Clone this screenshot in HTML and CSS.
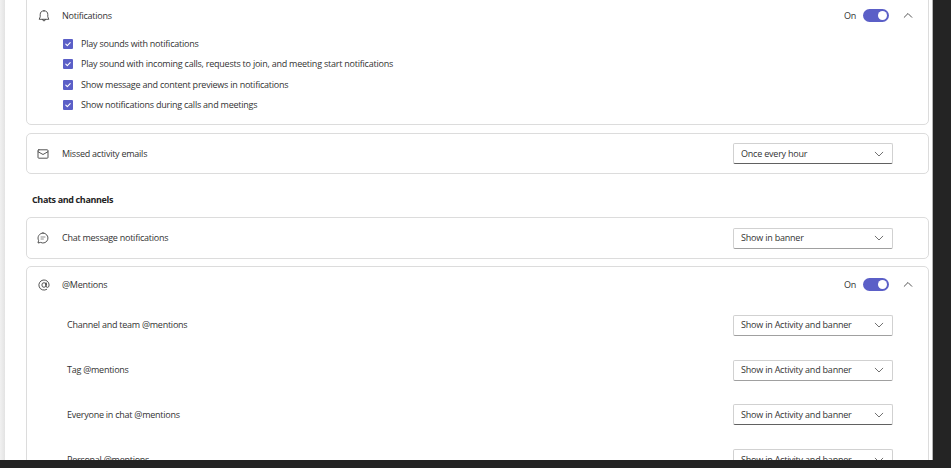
FILE: index.html
```html
<!DOCTYPE html>
<html lang="en">
<head>
    <meta charset="UTF-8">
    <meta name="viewport" content="width=device-width, initial-scale=1.0">
    <title>Notifications and activity</title>
    <link rel="stylesheet" href="styles.css">
</head>
<body>
<svg class="symbols" width="0" height="0">
    <symbol id="down" viewBox="0 0 10 10"><path d="M1.2 3.2 5 7l3.8-3.8"/></symbol>
    <symbol id="up" viewBox="0 0 10 10"><path d="M1.2 6.3 5 2.5l3.8 3.8"/></symbol>
    <symbol id="check" viewBox="0 0 10 10"><path d="m2.8 5.1 1.5 1.5 2.9-2.9"/></symbol>
</svg>
<main class="settings">
    <section class="card general">
        <div class="card-header">
            <svg class="icon" viewBox="0 0 12 12"><path d="M6 .8a3.8 3.8 0 0 0-3.8 3.8v2.2L1.2 9.3h9.6l-1-2.5V4.6A3.8 3.8 0 0 0 6 .8ZM4.6 9.5a1.4 1.4 0 0 0 2.8 0"/></svg>
            <span class="label">Notifications</span>
            <span class="state">On</span>
            <span class="toggle"></span>
            <svg class="chevron up"><use href="#up"/></svg>
        </div>
        <ul class="checks">
            <li><span class="checkbox"><svg><use href="#check"/></svg></span>Play sounds with notifications</li>
            <li><span class="checkbox"><svg><use href="#check"/></svg></span>Play sound with incoming calls, requests to join, and meeting start notifications</li>
            <li><span class="checkbox"><svg><use href="#check"/></svg></span>Show message and content previews in notifications</li>
            <li><span class="checkbox"><svg><use href="#check"/></svg></span>Show notifications during calls and meetings</li>
        </ul>
    </section>

    <section class="card single">
        <svg class="icon" viewBox="0 0 12 12"><path d="M1.8 1.8h8.4q.8 0 .8.8v6.8q0 .8-.8.8H1.8q-.8 0-.8-.8V2.6q0-.8.8-.8ZM1.2 3.8 6 6.5 10.8 3.8"/></svg>
        <span class="label">Missed activity emails</span>
        <div class="select dark">Once every hour<svg class="chevron"><use href="#down"/></svg></div>
    </section>

    <h2>Chats and channels</h2>

    <section class="card single chat">
        <svg class="icon" viewBox="0 0 12 12"><path d="M6 1a5 5 0 1 1-2.4 9.4L1 11l.6-2.6A5 5 0 0 1 6 1Z"/><path class="thin" d="M4 5h4M4 7h2.4"/></svg>
        <span class="label">Chat message notifications</span>
        <div class="select">Show in banner<svg class="chevron"><use href="#down"/></svg></div>
    </section>

    <section class="card mentions">
        <div class="card-header">
            <svg class="icon" viewBox="0 0 12 12"><path d="M8.1 6a2.1 2.3 0 1 1-4.2 0 2.1 2.3 0 1 1 4.2 0V3.7V7q0 1.4 1.3 1.4Q11.1 8.4 11.1 6A5.1 5.1 0 1 0 8.7 10.4"/></svg>
            <span class="label">@Mentions</span>
            <span class="state">On</span>
            <span class="toggle"></span>
            <svg class="chevron up"><use href="#up"/></svg>
        </div>
        <div class="row">
            <span class="label">Channel and team @mentions</span>
            <div class="select">Show in Activity and banner<svg class="chevron"><use href="#down"/></svg></div>
        </div>
        <div class="row">
            <span class="label">Tag @mentions</span>
            <div class="select">Show in Activity and banner<svg class="chevron"><use href="#down"/></svg></div>
        </div>
        <div class="row">
            <span class="label">Everyone in chat @mentions</span>
            <div class="select dark">Show in Activity and banner<svg class="chevron"><use href="#down"/></svg></div>
        </div>
        <div class="row">
            <span class="label">Personal @mentions</span>
            <div class="select">Show in Activity and banner<svg class="chevron"><use href="#down"/></svg></div>
        </div>
    </section>
</main>
</body>
</html>
```
FILE: styles.css
```css
* {
    box-sizing: border-box;
}
body {
    margin: 0;
    height: 468px;
    overflow: hidden;
    background: #242424;
    color: #333;
    font-family: "Open Sans", "Noto Sans", sans-serif;
    font-size: 9px;
    line-height: 12px;
    letter-spacing: -0.23px;
}
.symbols {
    position: absolute;
}
svg {
    fill: none;
    stroke: #424242;
    stroke-width: 0.9;
    stroke-linecap: round;
    stroke-linejoin: round;
    flex-shrink: 0;
}
.thin {
    stroke-width: 0.6;
}
.settings {
    width: 933px;
    height: 460px;
    overflow: hidden;
    padding: 0 3px 0 26px;
    background: linear-gradient(to right, #f1f1f1, #e3e3e3 5px, #fff 5px);
    border-right: 1px solid #b5b5b5;
}
.card {
    border: 1px solid #dcdcdc;
    border-radius: 5px;
    background: #fff;
}
.general {
    height: 131px;
    margin-top: -6px;
    margin-bottom: 8px;
}
.card-header {
    display: flex;
    align-items: center;
    height: 41px;
    padding: 0 15px 0 11px;
}
.icon {
    width: 12px;
    height: 12px;
    margin-right: 12px;
}
.label {
    flex: 1;
    letter-spacing: -0.25px;
}
.toggle {
    width: 26px;
    height: 13px;
    margin: 0 14px 0 7px;
    padding: 2px;
    border-radius: 7px;
    background: #5b5fc7;
}
.toggle::after {
    content: "";
    display: block;
    width: 9px;
    height: 9px;
    margin-left: auto;
    border-radius: 50%;
    background: #fff;
}
.chevron {
    width: 10px;
    height: 10px;
    stroke: #616161;
}
.up {
    stroke: #424242;
}
.checks {
    list-style: none;
    margin: -2.5px 0 0;
    padding: 0 0 0 36px;
}
.checks li {
    display: flex;
    align-items: center;
    height: 20.5px;
}
.checkbox {
    width: 10px;
    height: 10px;
    margin-right: 8px;
    border-radius: 1px;
    background: #5b5fc7;
}
.checkbox svg {
    display: block;
    width: 10px;
    height: 10px;
    stroke: #fff;
    stroke-width: 1.1;
}
.single {
    display: flex;
    align-items: center;
    height: 41px;
    padding: 0 35px 0 10px;
}
.single .icon {
    margin-right: 13px;
}
.chat {
    height: 42px;
}
.select {
    display: flex;
    align-items: center;
    justify-content: space-between;
    width: 160px;
    height: 21px;
    padding: 0 8px 0 7px;
    border: 1px solid #d1d1d1;
    border-bottom-color: #a0a0a0;
    border-radius: 2px;
    letter-spacing: -0.21px;
}
.dark {
    border-bottom-color: #616161;
}
h2 {
    margin: 20px 0 11px 6px;
    font-size: 9px;
    font-weight: 700;
    line-height: 12px;
    letter-spacing: -0.36px;
    color: #242424;
}
.mentions {
    height: 240px;
    margin-top: 7px;
}
.mentions .card-header {
    height: 35px;
    margin-bottom: 1px;
}
.row {
    display: flex;
    align-items: center;
    height: 44.8px;
    padding: 0 35px 0 40px;
}
```
